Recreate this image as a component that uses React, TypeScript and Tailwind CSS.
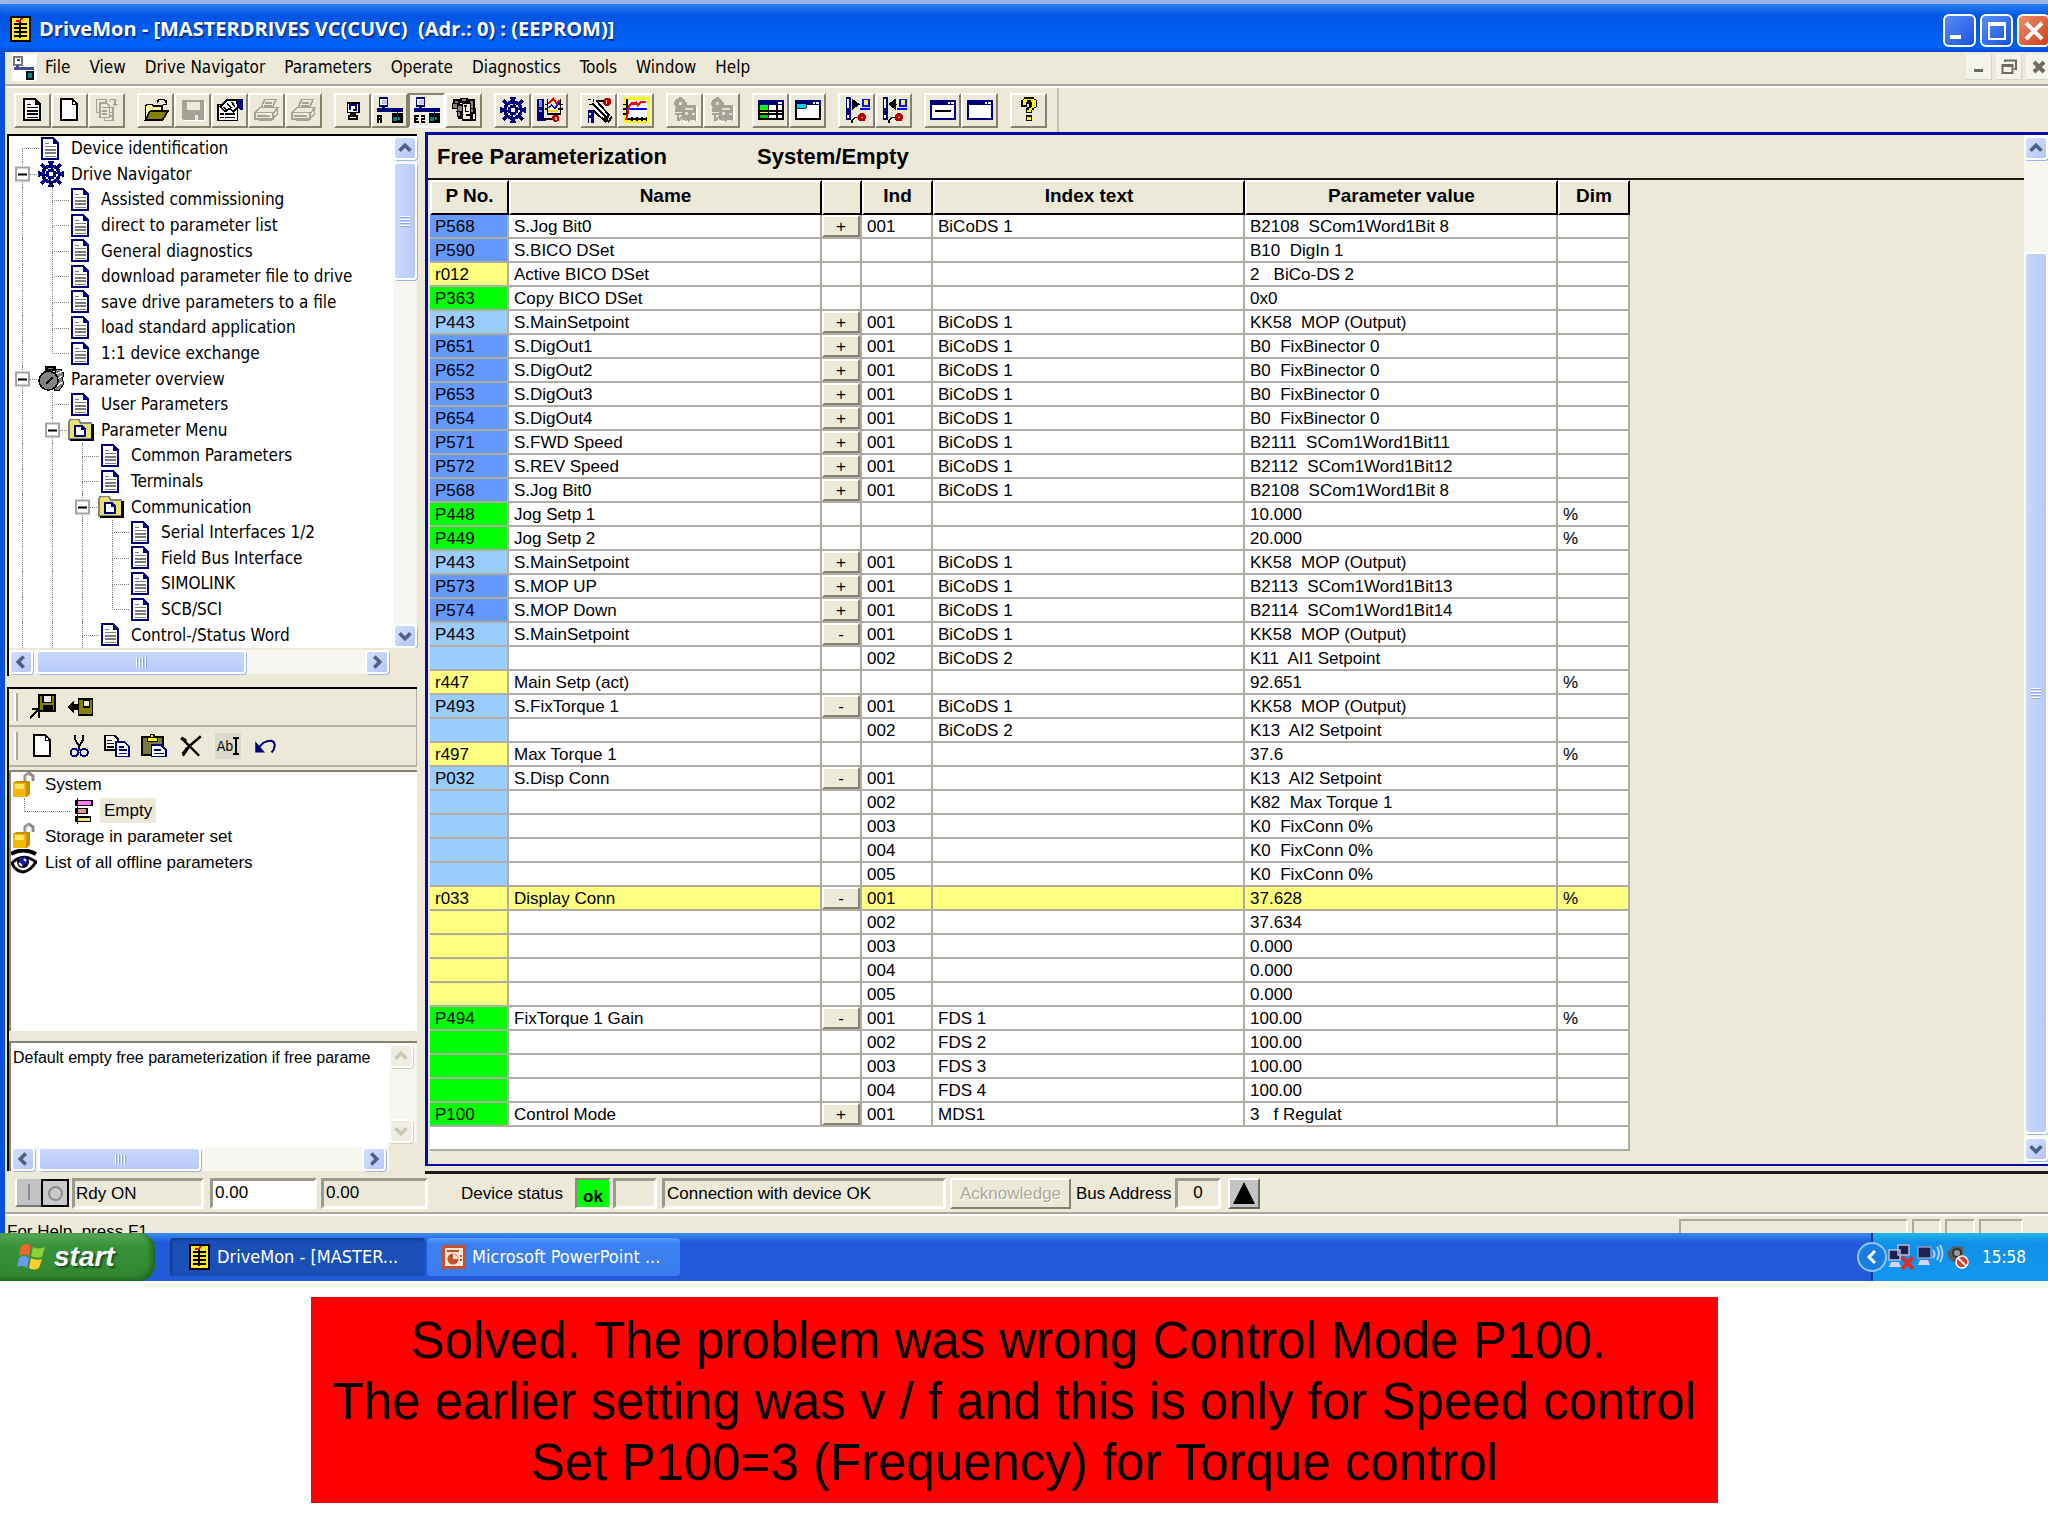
import type { ReactNode } from "react"

const tahoma = "font-['DejaVu_Sans_Condensed','DejaVu_Sans',sans-serif]"
const sans = "font-['Liberation_Sans',Arial,sans-serif]"

const NAVY = "#00007b"
const DIS = "#a5a295"

/* ---------- icons, all on a 16x16 pixel grid ---------- */

function Ico({ children, size = "w-[26px] h-[26px]" }: { children: ReactNode; size?: string }) {
  return (
    <svg viewBox="0 0 16 16" className={`${size} shrink-0`} shapeRendering="crispEdges" fill="none" aria-hidden="true">
      {children}
    </svg>
  )
}

const Doc = ({ ink = "#000", lines = "#000", text = true }: { ink?: string; lines?: string; text?: boolean }) => (
  <Ico>
    <path d="M2.5 1.5h7l3 3v9.500h-10z" fill="#fff" stroke={ink} strokeWidth="1.200" />
    <path d="M9 1h1l3 3v1h-4z" fill={ink} />
    {text ? (
      <path d="M4 4.500h3M4 6.500h7M4 8.500h7M4 10.500h7M4 12.500h7" stroke={lines} strokeWidth="1" />
    ) : (
      <path d="M10 3h1v1h-1z" fill="#fff" />
    )}
  </Ico>
)

const CopyGray = () => (
  <Ico>
    <path d="M1.500 1.500h6v3M1.500 1.500v8h2M3.500 3.500h4l2 2v7h-6zM7.500 6.500h4v8h-5v-2" stroke={DIS} />
    <path d="M5 6.500h3M5 8.500h3M5 10.500h3M9 9.500h2M9 11.500h2" stroke={DIS} />
    <path d="M10 1.500h3v4M11.500 4.500h3M9.500 3v-1" stroke={DIS} />
  </Ico>
)

const OpenFolder = () => (
  <Ico>
    <path d="M1.500 13.500v-8l1-1h3l1 1h5v3" fill="#ffff9c" stroke="#000" />
    <path d="M4.500 8.500h11l-3.500 5.500h-10.500z" fill="#848200" stroke="#000" />
    <path d="M8.500 3.500l1.500-2h3l1.500 2M12 4.500h3M14.500 2v3" stroke="#000" />
  </Ico>
)

const SaveGray = () => (
  <Ico>
    <path d="M1 2h14v12H2l-1-1z" fill={DIS} />
    <path d="M4 3h8v5H4z" fill="#ece9d8" />
    <path d="M9 11h2v3H9z" fill="#ece9d8" />
    <path d="M2 14.500h13.500V3" stroke="#fff" />
  </Ico>
)

const Properties = () => (
  <Ico>
    <path d="M.5 4.500h12v10h-12z" fill="#fff" stroke="#000" />
    <path d="M2 10.500h2M2 12.500h2M5 10.500h6M5 12.500h6" stroke="#000" />
    <path d="M2 6l4-4h6l1 4-3 3-2-2-3 2z" fill="#fff" stroke="#000" />
    <path d="M4 6l2 2M6 4l3 3M9 3l2 3" stroke="#000" />
    <path d="M12 1h4v7h-2l-1-2z" fill={NAVY} />
  </Ico>
)

const PrintGray = () => (
  <Ico>
    <path d="M4.500 6.500l2-5h7l-2 5M7 3.500h4M6 5.500h5" stroke={DIS} />
    <path d="M.5 9.500l3-3h11l-2 3zM.5 9.500v4h11v-4M11.500 13.500l3-3v-4M2 11.500h8" stroke={DIS} />
    <path d="M3 13h8v2H3z" fill={DIS} />
    <path d="M8 10h2v1H8z" fill="#fff" />
  </Ico>
)

const Monitor = () => (
  <Ico>
    <path d="M4.500 3.500h7v6h-7z" fill="#fff" stroke="#000" strokeWidth="1" />
    <path d="M6 8V5h4v3H8" stroke={NAVY} />
    <path d="M6 10h4v1h1v3H5v-3h1z" fill="#000" />
    <path d="M6 12h4v1H6z" fill="#ece9d8" />
  </Ico>
)

const Device = ({ tag }: { tag: "R" | "E" }) => (
  <Ico>
    <path d="M1.500 .5h5v5h-5z" fill="#fff" stroke={NAVY} />
    <path d="M3 2h3v2H3z" fill="#c6c3e6" />
    <path d="M3 6h2v2H3z" fill={NAVY} />
    <path d="M0 7h16v2H0zM12 9h1v2h-1z" fill={NAVY} />
    <path d="M9 10h7v6H9z" fill="#000" />
    <path d="M10 12h2v3h-2zM13 12h1v2h-1z" fill="#008284" />
    {tag === "R" ? (
      <path d="M.5 16v-4.500h2v2h-2M2.500 14v2" stroke="#000" />
    ) : (
      <path d="M3 11.500H.500v4H3M.5 13.500H2.500M4 11.500h2.500v2h-2v2H7" stroke="#000" />
    )}
  </Ico>
)

const Cabinet = () => (
  <Ico>
    <path d="M2 2h3v2H2zM6 1h4v2H6zM11 2h3v8h-3zM1 4h3v3H1zM4 5h4v7H4z" fill="#848284" stroke="#000" />
    <path d="M7 4h5v10H7z" fill="#ece9d8" stroke="#000" />
    <path d="M3 9h3v4H4M9 6v3h2M9 11h4v3M12 7h3v7h-3" stroke="#000" />
    <path d="M8 5h2v1H8z" fill="#000" />
  </Ico>
)

const Helm = () => (
  <Ico>
    <path d="M8 0v16M0 8h16M2 2l12 12M14 2L2 14" stroke={NAVY} strokeWidth="2" />
    <circle cx="8" cy="8" r="5" stroke={NAVY} strokeWidth="2.200" />
    <circle cx="8" cy="8" r="2.500" fill={NAVY} />
    <path d="M5 5h1v1H5zM10 5h1v1h-1zM5 10h1v1H5zM10 10h1v1h-1zM7 4h1v1H7zM4 7h1v1H4zM11 8h1v1h-1zM8 11h1v1H8zM7 7h2v2H7z" fill="#fff" />
    <path d="M6 0h4v1H6zM6 15h4v1H6zM0 6h1v4H0zM15 6h1v4h-1z" fill={NAVY} />
  </Ico>
)

const Trace = () => (
  <Ico>
    <path d="M0 1h4v14H0z" fill={NAVY} />
    <path d="M1 2h2v4H1zM1 8h2v1H1z" fill="#848ee6" />
    <path d="M6.500 1v10M6 10.500h9M14.500 1v9M5 4.500h2M5 7.500h2M13 4.500h3M13 7.500h3" stroke="#000" />
    <path d="M7 4l3-3 2 3 2-2" stroke="#f00" strokeWidth="1.300" />
    <path d="M7 7l2-2 2 2 3-4" stroke="#00f" />
    <path d="M7 8h6v1H7z" fill="#ffcf00" />
    <path d="M5 15v-1.500h5" stroke="#000" />
    <circle cx="11.500" cy="13" r="2.200" fill="#b50000" />
    <path d="M11 12h1v2h-1z" fill="#ffb5b5" />
  </Ico>
)

const WriteParam = () => (
  <Ico>
    <path d="M1 8h4v8H3v-3H2v3H1z" fill={NAVY} />
    <path d="M2 10h1v1H2z" fill="#fff" />
    <path d="M1 1.500h2M4.500 1v2M2 4.500h3M6 2.500h2M5 6.500h2" stroke="#000" />
    <path d="M4 4l9 9M7 3l7 8-2 4-8-7" fill="#fff" stroke="#000" strokeWidth="1.200" />
    <path d="M11 13l3 2 2-3" stroke="#000" strokeWidth="1.400" />
    <circle cx="13" cy="3" r="2.500" fill="#b50000" />
    <path d="M12 2h1v2h-1z" fill="#ffb5b5" />
    <path d="M8 2.500h3" stroke="#000" />
  </Ico>
)

const Curve = () => (
  <Ico>
    <path d="M0 0h16v16H0z" fill="#ff0" />
    <path d="M2 2h13v11H2z" fill="#fff" />
    <path d="M2.500 1v13M1 13.500h14M0 4.500h3M0 7.500h3M0 10.500h3M5.500 12v3M8.500 12v3M11.500 12v3M14.500 12v3" stroke="#000" />
    <path d="M2 7.500h13" stroke="#00f" />
    <path d="M2 14l2-9 1-1h3V3l1 2 2-2h3" stroke="#f00" strokeWidth="1.300" />
  </Ico>
)

const GearGray = () => (
  <Ico>
    <circle cx="5" cy="4" r="3.500" fill={DIS} />
    <path d="M4 0h2v8H4zM1 3h8v2H1zM6 5h9v9H6zM2 7h4v2H2z" fill={DIS} />
    <path d="M4 3h2v2H4zM8 7h5v1H8zM8 9h2v2H8zM12 10h2v1h-2z" fill="#e2dfce" />
    <path d="M2 10.500h4M3.500 11v4M6 12l-2 3M8.500 15v-3M10 15l2-2M14.500 15v-3" stroke={DIS} />
    <path d="M15.500 6v9M7 15.500h2" stroke="#fff" />
  </Ico>
)

const TableIcon = () => (
  <Ico>
    <path d="M.5 2.500h15v11h-15z" fill="#fff" stroke="#000" />
    <path d="M0 2h16v3H0z" fill={NAVY} />
    <path d="M1 5h5v3H1z" fill="#0f0" />
    <path d="M1 8h5v3H1z" fill="#ff0" />
    <path d="M1 11h5v2H1z" fill="#0c0" />
    <path d="M6.500 5v8M11.500 5v8M1 8.500h14M1 10.500h14" stroke="#000" />
    <path d="M12 3h3v1h-3z" fill="#fff" />
  </Ico>
)

const WindowIcon = ({ mode }: { mode: "tab" | "line" | "plain" }) => (
  <Ico>
    <path d="M.5 2.500h15v11h-15z" fill="#fff" stroke={mode === "tab" ? "#000" : NAVY} />
    <path d="M0 2h16v3H0z" fill={NAVY} />
    {mode === "tab" && <path d="M1 4h6v3H1z" fill="#00cfff" stroke="#000" strokeWidth=".5" />}
    {mode === "line" && <path d="M3 8.500h10" stroke="#000" />}
    <path d="M11 3h1v1h-1zM13 3h2v1h-2z" fill="#fff" />
  </Ico>
)

const Transfer = ({ back = false }: { back?: boolean }) => (
  <Ico>
    <path d="M1.500 .5h2v13h-2z" fill="#fff" stroke={NAVY} />
    <path d="M2 7h1v4H2z" fill={NAVY} />
    {back ? <path d="M9 1v7L5 5V4z" fill="#000" /> : <path d="M5 1v7l4-3V4z" fill="#000" />}
    <path d="M5 4h5v1H5z" fill="#000" />
    <path d="M11.500 1.500h4v4h-4z" fill="#ffef42" stroke="#00f" />
    <path d="M10 7.500h6" stroke="#00f" />
    <path d="M4 15.500h1v-1l2-2h3" stroke="#000" />
    <circle cx="11" cy="12.500" r="2.500" fill="#b50000" />
    <path d="M10.500 12h1v1h-1z" fill="#ffb5b5" />
  </Ico>
)

const Help = () => (
  <Ico>
    <path d="M3 6V2h1V1h1V0h6v1h1v1h1v4h-1v1h-1v1h-1v2H6V7h1V6h1V4H7v2z" fill="#000" />
    <path d="M4 5V2h1V1h6v1h1v4h-1v1h-1v1H9v1H7V8h1V7h1V6h1V3H9V2H7v1H6v2z" fill="#ff0" />
    <path d="M6 11h4v4H6z" fill="#000" />
    <path d="M7 12h2v2H7z" fill="#ff0" />
  </Ico>
)

const Controller = () => (
  <Ico>
    <path d="M4 0h7v3H4z" fill="#000" />
    <path d="M11 2h3l2 3-1 3 1 3-3 4h-3z" fill="#848284" stroke="#000" strokeWidth=".7" />
    <path d="M11 5l4-2M12 8l3-2M12 12l3-2" stroke="#fff" strokeWidth=".8" />
    <circle cx="6.500" cy="9" r="5.800" fill="#848284" stroke="#000" />
    <path d="M5 11l4-4" stroke="#000" />
    <path d="M6 1h3v1H6z" fill="#848284" />
  </Ico>
)

const FolderDoc = () => (
  <Ico>
    <path d="M.5 13.500v-10l1-2h5l1 2h7v10z" fill="#e7e36b" stroke="#848284" />
    <path d="M1 14h14V4" stroke="#000" strokeWidth="1.500" />
    <path d="M4.500 5.500h4l2 2v4h-6z" fill="#fff" stroke={NAVY} strokeWidth="1.300" />
    <path d="M8 5h1l2 2v1H8z" fill={NAVY} />
  </Ico>
)

const Lock = () => (
  <svg viewBox="0 0 26 26" className="w-[26px] h-[26px] shrink-0" fill="none" aria-hidden="true">
    <path d="M14 11V4l4-3 4 3v5" stroke="#8a8a8a" strokeWidth="3" />
    <path d="M15 9V4l3-2" stroke="#d8d8d8" strokeWidth="1" />
    <path d="M2 11l3-2h14v13l-3 3H2z" fill="#c98d00" />
    <path d="M2 11h13v14H2z" fill="#f2b705" />
    <path d="M4 12h9v5H4z" fill="#ffe566" />
  </svg>
)

const ListIcon = () => (
  <Ico>
    <path d="M4.500 0v16" stroke="#000" />
    <path d="M3 1h11v4H3zM3 6h8v4H3zM3 11h10v4H3z" fill="#000" />
    <path d="M5 2h8v2H5z" fill="#ff7bff" />
    <path d="M5 7h5v2H5z" fill="#e79a9a" />
    <path d="M5 12h7v2H5z" fill="#efe76b" />
  </Ico>
)

const Eye = () => (
  <svg viewBox="0 0 26 26" className="w-[26px] h-[26px] shrink-0" fill="none" aria-hidden="true">
    <path d="M0 5Q12-2 25 5" stroke="#000" strokeWidth="4" />
    <path d="M1 14Q12 3 25 13Q19 22 12 23Q4 22 1 14z" fill="#fff" stroke="#000" strokeWidth="3" />
    <circle cx="12" cy="13" r="6" fill="#000" />
    <circle cx="12" cy="12" r="4" fill="#1818b8" />
    <path d="M8 14l3 3M13 10l2 2" stroke="#fff" strokeWidth="2" />
  </svg>
)

const DiskIn = () => (
  <Ico>
    <path d="M5.500 .5h10v10h-10z" fill="#848200" stroke="#000" />
    <path d="M8 1h5v4H8z" fill="#ece9d8" stroke="#000" strokeWidth=".7" />
    <path d="M8 7h6v4H8z" fill="#000" />
    <path d="M0 15l5-5M1 9.500h4.500v5" stroke="#000" strokeWidth="1.300" />
  </Ico>
)

const DiskOut = () => (
  <Ico>
    <path d="M7 3h9v10H7z" fill="#848200" stroke="#000" strokeWidth=".8" />
    <path d="M10 4h4v4h-4z" fill="#ece9d8" stroke="#000" strokeWidth=".7" />
    <path d="M0 8l4-4v2h3v4H4v2z" fill="#000" />
  </Ico>
)

const Cut = () => (
  <Ico>
    <path d="M5 1v3l3 5M10 1v3L7 9" stroke="#000" strokeWidth="1.200" />
    <circle cx="4.500" cy="12" r="2.300" stroke={NAVY} strokeWidth="1.200" />
    <circle cx="10.500" cy="12" r="2.300" stroke={NAVY} strokeWidth="1.200" />
    <path d="M7 9h1v2H7z" fill={NAVY} />
  </Ico>
)

const Copy = () => (
  <Ico>
    <path d="M.5 1.500h6l2 2v7h-8z" fill="#fff" stroke="#000" />
    <path d="M2 4.500h3M2 6.500h4M2 8.500h4" stroke="#000" />
    <path d="M7.500 5.500h5l3 3v6h-8z" fill="#fff" stroke={NAVY} />
    <path d="M9 8.500h3M9 10.500h5M9 12.500h5" stroke={NAVY} />
  </Ico>
)

const Paste = () => (
  <Ico>
    <path d="M.5 2.500h13v11h-13z" fill="#7b7942" stroke="#000" />
    <path d="M4 3h6v2H4z" fill="#ff0" stroke="#000" strokeWidth=".7" />
    <path d="M6 1h2v2H6z" fill="#ff0" stroke="#000" strokeWidth=".7" />
    <path d="M6.500 7.500h6l3 3v4h-9z" fill="#fff" stroke={NAVY} />
    <path d="M8 10.500h4M8 12.500h6" stroke={NAVY} />
  </Ico>
)

const Delete = () => (
  <svg viewBox="0 0 16 16" className="w-[26px] h-[26px] shrink-0" fill="none" aria-hidden="true">
    <path d="M2 3l11 11M14 2L7 8l-4 6" stroke="#000" strokeWidth="1.500" />
    <path d="M3 13l3-4M2 3l3 2" stroke="#000" strokeWidth="2" />
  </svg>
)

const RenameCursor = () => (
  <svg viewBox="0 0 6 18" className="h-[18px] w-[6px]" shapeRendering="crispEdges" fill="none" aria-hidden="true">
    <path d="M0 1h6M3 1v16M0 17h6" stroke="#000" strokeWidth="2" />
  </svg>
)

const Undo = () => (
  <svg viewBox="0 0 16 16" className="w-[26px] h-[26px] shrink-0" fill="none" aria-hidden="true">
    <path d="M2 5v7h6z" fill={NAVY} />
    <path d="M4 9l3-3Q13 3 14 7Q14 10 12 12" stroke={NAVY} strokeWidth="1.200" />
  </svg>
)

const AppIcon = () => (
  <svg viewBox="0 0 21 26" className="h-[26px] w-[21px] shrink-0" shapeRendering="crispEdges" aria-hidden="true">
    <path d="M0 0h21v26H0z" fill="#000" />
    <path d="M2 2h17v22H2z" fill="#ffe81f" />
    <path d="M4 8h13M4 12h13M4 16h13M4 20h13M10 6v16" stroke="#000" strokeWidth="2" />
    <path d="M6 5h3M9 6l3-4" stroke="#e00" strokeWidth="2" />
  </svg>
)

const MdiIcon = () => (
  <svg viewBox="0 0 25 27" className="h-[27px] w-[25px] shrink-0" shapeRendering="crispEdges" aria-hidden="true">
    <path d="M0 0h25v27H0z" fill="#fff" />
    <path d="M2 3h8v8H2z" fill="#fff" stroke="#777" strokeWidth="2" />
    <path d="M5 5h3v2H5zM4 11h3v3H4z" fill="#4a4a9c" />
    <path d="M2 13h20v3H2z" fill="#4a4a9c" />
    <path d="M14 17h8v9h-8z" fill="#111" />
    <path d="M16 19h4v5h-4z" fill="#008284" />
  </svg>
)

/* ---------- window parts ---------- */

const chevrons = {
  up: "M5 14l6-6 6 6",
  down: "M5 8l6 6 6-6",
  left: "M14 5l-6 6 6 6",
  right: "M8 5l6 6-6 6",
}

function ScrollButton({ dir, disabled = false }: { dir: keyof typeof chevrons; disabled?: boolean }) {
  return (
    <button
      type="button"
      aria-label={`Scroll ${dir}`}
      disabled={disabled}
      className={`flex size-6 shrink-0 items-center justify-center rounded-sm border-2 border-white ${
        disabled ? "bg-[#efede2] shadow-[1px_1px_0_#d4d1c0]" : "bg-linear-to-br from-[#d6e0fd] to-[#b4c6f8] shadow-[1px_1px_0_#9db5ea]"
      }`}
    >
      <svg viewBox="0 0 22 22" className="size-5" fill="none">
        <path d={chevrons[dir]} stroke={disabled ? "#c9c7ba" : "#4d6185"} strokeWidth="4" />
      </svg>
    </button>
  )
}

function Thumb({ vertical = false, className = "" }: { vertical?: boolean; className?: string }) {
  return (
    <div
      className={`flex items-center justify-center rounded-sm border-2 border-white shadow-[1px_1px_0_#9db5ea] ${
        vertical ? "w-6 bg-linear-to-r" : "h-6 bg-linear-to-b"
      } from-[#cbd8fc] to-[#b8caf9] ${className}`}
    >
      <div className={`flex gap-[2px] ${vertical ? "flex-col" : ""}`}>
        {[0, 1, 2, 3].map((i) => (
          <span
            key={i}
            className={
              vertical ? "h-px w-[10px] bg-white shadow-[0_1px_0_#8caae6]" : "h-[11px] w-px bg-white shadow-[1px_0_0_#8caae6]"
            }
          />
        ))}
      </div>
    </div>
  )
}

function ToolButton({ label, pressed = false, disabled = false, children }: { label: string; pressed?: boolean; disabled?: boolean; children: ReactNode }) {
  return (
    <button
      type="button"
      aria-label={label}
      disabled={disabled}
      className={`flex h-[35px] w-[37px] items-center justify-center border-2 ${
        pressed
          ? "border-t-[#85826f] border-l-[#85826f] border-r-white border-b-white bg-[#f4f3ea]"
          : "border-t-white border-l-white border-r-[#85826f] border-b-[#85826f]"
      }`}
    >
      {children}
    </button>
  )
}

const toolGroups: { label: string; icon: ReactNode; pressed?: boolean; disabled?: boolean }[][] = [
  [
    { label: "Parameter list", icon: <Doc /> },
    { label: "New", icon: <Doc text={false} /> },
    { label: "Duplicate", icon: <CopyGray />, disabled: true },
  ],
  [
    { label: "Open", icon: <OpenFolder /> },
    { label: "Save", icon: <SaveGray />, disabled: true },
    { label: "Properties", icon: <Properties /> },
    { label: "Print", icon: <PrintGray />, disabled: true },
    { label: "Print preview", icon: <PrintGray />, disabled: true },
  ],
  [
    { label: "Offline", icon: <Monitor /> },
    { label: "Online RAM", icon: <Device tag="R" /> },
    { label: "Online EEPROM", icon: <Device tag="E" />, pressed: true },
    { label: "Device", icon: <Cabinet /> },
  ],
  [
    { label: "Drive navigator", icon: <Helm /> },
    { label: "Trace", icon: <Trace /> },
  ],
  [
    { label: "Write parameter", icon: <WriteParam /> },
    { label: "Curve", icon: <Curve /> },
  ],
  [
    { label: "Start drive", icon: <GearGray />, disabled: true },
    { label: "Stop drive", icon: <GearGray />, disabled: true },
  ],
  [
    { label: "Table view", icon: <TableIcon /> },
    { label: "Tab view", icon: <WindowIcon mode="tab" /> },
  ],
  [
    { label: "Download", icon: <Transfer /> },
    { label: "Upload", icon: <Transfer back /> },
  ],
  [
    { label: "Split window", icon: <WindowIcon mode="line" /> },
    { label: "Single window", icon: <WindowIcon mode="plain" /> },
  ],
  [{ label: "Help", icon: <Help /> }],
]

const menus = ["File", "View", "Drive Navigator", "Parameters", "Operate", "Diagnostics", "Tools", "Window", "Help"]

/* ---------- navigation tree ---------- */

type TreeRow = { level: number; label: string; icon?: "helm" | "controller" | "folder"; first?: boolean; last?: boolean }

const tree: TreeRow[] = [
  { level: 0, label: "Device identification", first: true },
  { level: 0, label: "Drive Navigator", icon: "helm" },
  { level: 1, label: "Assisted commissioning" },
  { level: 1, label: "direct to parameter list" },
  { level: 1, label: "General diagnostics" },
  { level: 1, label: "download parameter file to drive" },
  { level: 1, label: "save drive parameters to a file" },
  { level: 1, label: "load standard application" },
  { level: 1, label: "1:1 device exchange", last: true },
  { level: 0, label: "Parameter overview", icon: "controller" },
  { level: 1, label: "User Parameters" },
  { level: 1, label: "Parameter Menu", icon: "folder" },
  { level: 2, label: "Common Parameters" },
  { level: 2, label: "Terminals" },
  { level: 2, label: "Communication", icon: "folder" },
  { level: 3, label: "Serial Interfaces 1/2" },
  { level: 3, label: "Field Bus Interface" },
  { level: 3, label: "SIMOLINK" },
  { level: 3, label: "SCB/SCI", last: true },
  { level: 2, label: "Control-/Status Word" },
]

function TreeItem({ row }: { row: TreeRow }) {
  const { level, label, icon, first, last } = row
  return (
    <li className="flex min-h-0 items-center">
      {Array.from({ length: level }, (_, i) => (
        <span key={i} className="ml-[13px] h-full w-[17px] shrink-0 border-l border-dotted border-[#808080]" />
      ))}
      <span className="relative ml-[13px] flex h-full w-[17px] shrink-0 flex-col">
        <span className={`flex-1 border-b border-dotted border-[#808080] ${first ? "" : "border-l"}`} />
        <span className={`flex-1 border-dotted border-[#808080] ${last ? "" : "border-l"}`} />
        {icon && (
          <button
            type="button"
            aria-label={`Collapse ${label}`}
            className="absolute top-1/2 -left-[7px] flex size-[15px] -translate-y-1/2 items-center justify-center border-2 border-[#a5a5a0] bg-white"
          >
            <span className="h-[2px] w-[9px] bg-black" />
          </button>
        )}
      </span>
      <span className="flex w-6 shrink-0 justify-center">
        {icon === "helm" && <Helm />}
        {icon === "controller" && <Controller />}
        {icon === "folder" && <FolderDoc />}
        {!icon && <Doc ink={NAVY} lines="#7b7b7b" />}
      </span>
      <span className="ml-2 whitespace-nowrap">{label}</span>
    </li>
  )
}

/* ---------- parameter table ---------- */

type Kind = "blue" | "light" | "yellow" | "green"
type Param = [kind: Kind, no: string, name: string, sign: string, ind: string, text: string, value: string, dim?: string]

const params: Param[] = [
  ["blue", "P568", "S.Jog Bit0", "+", "001", "BiCoDS 1", "B2108  SCom1Word1Bit 8"],
  ["blue", "P590", "S.BICO DSet", "", "", "", "B10  DigIn 1"],
  ["yellow", "r012", "Active BICO DSet", "", "", "", "2   BiCo-DS 2"],
  ["green", "P363", "Copy BICO DSet", "", "", "", "0x0"],
  ["light", "P443", "S.MainSetpoint", "+", "001", "BiCoDS 1", "KK58  MOP (Output)"],
  ["blue", "P651", "S.DigOut1", "+", "001", "BiCoDS 1", "B0  FixBinector 0"],
  ["blue", "P652", "S.DigOut2", "+", "001", "BiCoDS 1", "B0  FixBinector 0"],
  ["blue", "P653", "S.DigOut3", "+", "001", "BiCoDS 1", "B0  FixBinector 0"],
  ["blue", "P654", "S.DigOut4", "+", "001", "BiCoDS 1", "B0  FixBinector 0"],
  ["blue", "P571", "S.FWD Speed", "+", "001", "BiCoDS 1", "B2111  SCom1Word1Bit11"],
  ["blue", "P572", "S.REV Speed", "+", "001", "BiCoDS 1", "B2112  SCom1Word1Bit12"],
  ["blue", "P568", "S.Jog Bit0", "+", "001", "BiCoDS 1", "B2108  SCom1Word1Bit 8"],
  ["green", "P448", "Jog Setp 1", "", "", "", "10.000", "%"],
  ["green", "P449", "Jog Setp 2", "", "", "", "20.000", "%"],
  ["light", "P443", "S.MainSetpoint", "+", "001", "BiCoDS 1", "KK58  MOP (Output)"],
  ["blue", "P573", "S.MOP UP", "+", "001", "BiCoDS 1", "B2113  SCom1Word1Bit13"],
  ["blue", "P574", "S.MOP Down", "+", "001", "BiCoDS 1", "B2114  SCom1Word1Bit14"],
  ["light", "P443", "S.MainSetpoint", "-", "001", "BiCoDS 1", "KK58  MOP (Output)"],
  ["light", "", "", "", "002", "BiCoDS 2", "K11  AI1 Setpoint"],
  ["yellow", "r447", "Main Setp (act)", "", "", "", "92.651", "%"],
  ["light", "P493", "S.FixTorque 1", "-", "001", "BiCoDS 1", "KK58  MOP (Output)"],
  ["light", "", "", "", "002", "BiCoDS 2", "K13  AI2 Setpoint"],
  ["yellow", "r497", "Max Torque 1", "", "", "", "37.6", "%"],
  ["light", "P032", "S.Disp Conn", "-", "001", "", "K13  AI2 Setpoint"],
  ["light", "", "", "", "002", "", "K82  Max Torque 1"],
  ["light", "", "", "", "003", "", "K0  FixConn 0%"],
  ["light", "", "", "", "004", "", "K0  FixConn 0%"],
  ["light", "", "", "", "005", "", "K0  FixConn 0%"],
  ["yellow", "r033", "Display Conn", "-", "001", "", "37.628", "%"],
  ["yellow", "", "", "", "002", "", "37.634"],
  ["yellow", "", "", "", "003", "", "0.000"],
  ["yellow", "", "", "", "004", "", "0.000"],
  ["yellow", "", "", "", "005", "", "0.000"],
  ["green", "P494", "FixTorque 1 Gain", "-", "001", "FDS 1", "100.00", "%"],
  ["green", "", "", "", "002", "FDS 2", "100.00"],
  ["green", "", "", "", "003", "FDS 3", "100.00"],
  ["green", "", "", "", "004", "FDS 4", "100.00"],
  ["green", "P100", "Control Mode", "+", "001", "MDS1", "3   f Regulat"],
]

const kindColor: Record<Kind, string> = {
  blue: "bg-[#6699ff]",
  light: "bg-[#99ccff]",
  yellow: "bg-[#ffff80]",
  green: "bg-[#00ff00]",
}

function ParamTable() {
  const cell = "h-6 overflow-hidden border-r-2 border-b-2 border-[#b0aea4] p-0 pt-[2px] pl-[5px] whitespace-pre"
  return (
    <table className={`w-[1200px] table-fixed border-separate border-spacing-0 text-[17px] leading-[20px] ${sans}`}>
      <colgroup>
        <col className="w-[79px]" />
        <col className="w-[313px]" />
        <col className="w-[40px]" />
        <col className="w-[71px]" />
        <col className="w-[312px]" />
        <col className="w-[313px]" />
        <col className="w-[72px]" />
      </colgroup>
      <thead>
        <tr>
          {["P No.", "Name", "", "Ind", "Index text", "Parameter value", "Dim"].map((h, i) => (
            <th
              key={i}
              scope="col"
              className="h-[35px] border-2 border-t-white border-l-white border-r-black border-b-black bg-[#ece9d8] p-0 pb-[3px] text-[19px] font-bold"
            >
              {h}
            </th>
          ))}
        </tr>
      </thead>
      <tbody className="bg-white">
        {params.map(([kind, no, name, sign, ind, text, value, dim], i) => (
          <tr key={i} className={no === "r033" ? "bg-[#ffff80]" : ""}>
            <td className={`${cell} ${kindColor[kind]}`}>{no}</td>
            <td className={cell}>{name}</td>
            <td className="h-6 border-r-2 border-b-2 border-[#b0aea4] p-0">
              {sign && (
                <button
                  type="button"
                  aria-label={sign === "+" ? "Expand indices" : "Collapse indices"}
                  className="block h-[22px] w-full border-2 border-t-white border-l-white border-r-[#85826f] border-b-[#85826f] bg-[#ece9d8] text-center leading-[20px]"
                >
                  {sign}
                </button>
              )}
            </td>
            <td className={cell}>{ind}</td>
            <td className={cell}>{text}</td>
            <td className={cell}>{value}</td>
            <td className={cell}>{dim}</td>
          </tr>
        ))}
        <tr>
          <td colSpan={7} className="h-6 border-r-2 border-b-2 border-[#b0aea4] p-0" />
        </tr>
      </tbody>
    </table>
  )
}

/* ---------- main regions ---------- */

function TitleBar() {
  const btn = "flex size-[33px] items-center justify-center rounded-md border-2 border-white"
  return (
    <header className="overflow-hidden border-t-4 border-[#9cb4ea]">
      <div className="flex h-12 items-center bg-linear-to-b from-[#2a80f6] via-[#0054e3] via-25% to-[#0066ff] pt-[2px] pl-[10px] shadow-[inset_0_-4px_4px_-2px_#0a3fc0]">
        <AppIcon />
        <h1 className="ml-2 text-[20px] leading-6 font-bold whitespace-pre text-white [text-shadow:1px_2px_1px_#0a2a80] font-['Open_Sans',sans-serif]">
          {"DriveMon - [MASTERDRIVES VC(CUVC)  (Adr.: 0) : (EEPROM)]"}
        </h1>
        <div className="mt-[3px] -mr-[2px] ml-auto flex gap-[4px]">
          <button type="button" aria-label="Minimize" className={`${btn} bg-linear-to-br from-[#5a8cf5] to-[#1c50e0]`}>
            <span className="mt-3 mr-2 h-[4px] w-[11px] bg-white" />
          </button>
          <button type="button" aria-label="Maximize" className={`${btn} bg-linear-to-br from-[#5a8cf5] to-[#1c50e0]`}>
            <span className="size-[18px] border-2 border-t-4 border-white" />
          </button>
          <button type="button" aria-label="Close" className={`${btn} bg-linear-to-br from-[#f08a6c] to-[#cf3a12]`}>
            <svg viewBox="0 0 20 20" className="size-5">
              <path d="M2 2l16 16M18 2L2 18" stroke="#fff" strokeWidth="4" />
            </svg>
          </button>
        </div>
      </div>
    </header>
  )
}

function MenuBar() {
  const btn = "flex size-[26px] items-center justify-center border-r border-b border-[#d8d5c4] bg-[#f4f3ec]"
  return (
    <nav className="flex h-[34px] items-center overflow-hidden border-b-2 border-[#aca899] pb-[2px] pl-[7px]">
      <MdiIcon />
      <ul className={`ml-2 flex gap-[19px] text-[17px] leading-6 ${tahoma}`}>
        {menus.map((m) => (
          <li key={m}>
            <button type="button">{m}</button>
          </li>
        ))}
      </ul>
      <div className="-mr-[4px] ml-auto flex gap-[4px]">
        <button type="button" aria-label="Minimize child" className={btn}>
          <span className="mt-2 h-[3px] w-[9px] bg-[#6e6c60]" />
        </button>
        <button type="button" aria-label="Restore child" className={btn}>
          <svg viewBox="0 0 16 16" className="size-4" fill="none" stroke="#6e6c60">
            <path d="M4 3V1.500h11V10h-2" strokeWidth="2" />
            <path d="M1.500 6h10v8h-10z" strokeWidth="2" />
            <path d="M1 6.500h11" strokeWidth="3" />
          </svg>
        </button>
        <button type="button" aria-label="Close child" className={btn}>
          <svg viewBox="0 0 16 16" className="size-4" stroke="#6e6c60" strokeWidth="4">
            <path d="M3 3l10 10M13 3L3 13" />
          </svg>
        </button>
      </div>
    </nav>
  )
}

function Toolbar() {
  return (
    <div className="flex h-[46px] items-center border-t-2 border-white pl-[9px]">
      <div className="flex h-full items-center gap-3 border-r-2 border-[#c4c1b0] pr-[10px]">
        {toolGroups.map((group, i) => (
          <div key={i} className="flex">
            {group.map((t) => (
              <ToolButton key={t.label} label={t.label} pressed={t.pressed} disabled={t.disabled}>
                {t.icon}
              </ToolButton>
            ))}
          </div>
        ))}
      </div>
    </div>
  )
}

function Sidebar() {
  const strip = "flex items-center border-r border-b-2 border-[#b5b2a2] pl-[5px]"
  const grip = "h-7 w-1 border-r-2 border-[#aca899] bg-white"
  return (
    <aside className={`flex w-[412px] shrink-0 flex-col pt-[2px] pl-[2px] text-[17px] leading-none ${tahoma}`}>
      {/* navigation tree */}
      <div className="flex h-[542px] flex-col border-t-2 border-l-2 border-black bg-white">
        <div className="flex min-h-0 flex-1">
          <ul className="grid h-[512px] min-w-0 flex-1 auto-rows-fr overflow-hidden">
            {tree.map((row) => (
              <TreeItem key={row.label} row={row} />
            ))}
          </ul>
          <div className="flex w-6 flex-col bg-[#f7f6f1]">
            <ScrollButton dir="up" />
            <Thumb vertical className="mt-[2px] h-[118px]" />
            <div className="mt-auto">
              <ScrollButton dir="down" />
            </div>
          </div>
        </div>
        <div className="flex h-[28px] items-center bg-[#ece9d8]">
          <div className="flex flex-1 items-center bg-[#f7f6f1]">
            <ScrollButton dir="left" />
            <Thumb className="ml-[3px] w-[210px]" />
            <div className="ml-auto">
              <ScrollButton dir="right" />
            </div>
          </div>
          <div className="w-7" />
        </div>
      </div>

      {/* free parameterization files */}
      <div className="mt-[11px] flex h-[484px] flex-col border-t-2 border-l-2 border-black">
        <div className={`${strip} h-[38px]`}>
          <div className={grip} />
          <button type="button" aria-label="Load set" className="ml-[12px]">
            <DiskIn />
          </button>
          <button type="button" aria-label="Store set" className="ml-[11px]">
            <DiskOut />
          </button>
        </div>
        <div className={`${strip} h-10`}>
          <div className={grip} />
          <div className="ml-3 flex gap-[11px]">
            <button type="button" aria-label="New entry">
              <Doc text={false} />
            </button>
            <button type="button" aria-label="Cut">
              <Cut />
            </button>
            <button type="button" aria-label="Copy">
              <Copy />
            </button>
            <button type="button" aria-label="Paste">
              <Paste />
            </button>
            <button type="button" aria-label="Delete">
              <Delete />
            </button>
            <button type="button" aria-label="Rename" className="flex h-[26px] w-[26px] items-center justify-center bg-[#dcd9cf] text-[14px]">
              Ab
              <RenameCursor />
            </button>
            <button type="button" aria-label="Undo">
              <Undo />
            </button>
          </div>
        </div>
        <div className={`mt-[3px] h-[261px] border-t-2 border-l-2 border-[#85826f] bg-white ${sans}`}>
          <ul className="grid h-[103px] auto-rows-fr text-[17px]">
            <li className="flex min-h-0 items-center gap-[8px]">
              <Lock />
              System
            </li>
            <li className="flex min-h-0 items-center">
              <span className="mb-3 ml-[13px] h-[14px] w-[46px] border-b border-l border-dotted border-[#808080]" />
              <ListIcon />
              <span className="ml-1 bg-[#ece9d8] px-[4px] py-[4px]">Empty</span>
            </li>
            <li className="flex min-h-0 items-center gap-[8px]">
              <Lock />
              Storage in parameter set
            </li>
            <li className="flex min-h-0 items-center gap-[8px]">
              <Eye />
              List of all offline parameters
            </li>
          </ul>
        </div>
        <div className="mt-[10px] flex flex-1 border-t-2 border-l-2 border-[#85826f] bg-white">
          <div className="flex min-w-0 flex-1 flex-col">
            <p className={`flex-1 overflow-hidden pt-[5px] pl-[2px] text-[16px] leading-5 whitespace-nowrap ${sans}`}>
              Default empty free parameterization if free parame
            </p>
            <div className="flex items-center bg-[#f7f6f1] pr-[3px]">
              <ScrollButton dir="left" />
              <Thumb className="ml-[3px] w-[163px]" />
              <div className="ml-auto">
                <ScrollButton dir="right" />
              </div>
            </div>
          </div>
          <div className="flex w-7 flex-col bg-[#ece9d8]">
            <div className="flex flex-1 flex-col justify-between bg-[#f7f6f1] pt-px">
              <ScrollButton dir="up" disabled />
              <ScrollButton dir="down" disabled />
            </div>
            <div className="h-7" />
          </div>
        </div>
      </div>
    </aside>
  )
}

function ControlBar() {
  const sunken = "h-[31px] border-3 border-t-[#9c9a8c] border-l-[#9c9a8c] border-r-white border-b-white"
  return (
    <div className={`flex h-10 items-center border-b-2 border-[#aca899] pl-[10px] text-[17px] leading-none whitespace-nowrap ${sans}`}>
      <button type="button" aria-label="On" className="flex h-7 w-[26px] items-center justify-center border-b-2 border-l-2 border-b-[#777] border-l-white bg-[#c3c3c3]">
        <span className="h-4 w-[2px] bg-[#8a8a8a]" />
      </button>
      <button type="button" aria-label="Off" className="flex h-7 w-[28px] items-center justify-center border-2 border-black bg-[#c9c9c9]">
        <span className="size-[15px] rounded-full border-2 border-[#8a8a8a]" />
      </button>
      <div className={`${sunken} ml-[3px] flex w-[132px] items-center pl-[1px]`}>Rdy ON</div>
      <input aria-label="Setpoint" defaultValue="0.00" className={`${sunken} ml-[6px] w-[107px] bg-white pl-[2px]`} />
      <input aria-label="Actual value" readOnly defaultValue="0.00" className={`${sunken} ml-[4px] w-[107px] pl-[2px]`} />
      <span className="ml-[33px] w-[114px]">Device status</span>
      <span className="flex h-[31px] w-[36px] items-end justify-center border-2 border-t-[#8c8a7c] border-l-[#8c8a7c] border-r-white border-b-white bg-[#00ff00] pb-[2px] font-bold">
        ok
      </span>
      <div className={`${sunken} ml-[2px] w-[44px]`} />
      <div className={`${sunken} ml-[5px] flex w-[284px] items-center pl-[2px]`}>Connection with device OK</div>
      <button
        type="button"
        disabled
        className="ml-[4px] h-[31px] w-[121px] border-2 border-t-white border-l-white border-r-[#85826f] border-b-[#85826f] text-[#aca899] [text-shadow:1px_1px_0_#fff]"
      >
        Acknowledge
      </button>
      <label htmlFor="bus" className="ml-[5px] w-[99px]">
        Bus Address
      </label>
      <input id="bus" defaultValue="0" className={`${sunken} w-[46px] text-center`} />
      <button type="button" aria-label="Next address" className="ml-[7px] flex h-[31px] w-8 items-center justify-center border-2 border-t-white border-l-white border-r-[#666] border-b-[#666] bg-[#c3c3c3]">
        <svg viewBox="0 0 22 22" className="size-[22px]">
          <path d="M11 0l11 22H0z" fill="#000" />
        </svg>
      </button>
    </div>
  )
}

function StatusBar() {
  const pane = "h-full border-t-2 border-l-2 border-r-2 border-t-[#aca899] border-l-[#aca899] border-r-white"
  return (
    <footer className="flex h-[19px] overflow-hidden border-t-2 border-white">
      <span className={`pt-[6px] pl-[2px] text-[17px] leading-[20px] ${sans}`}>For Help, press F1</span>
      <div className="mt-[3px] mr-[25px] ml-auto flex gap-[4px]">
        <div className={`${pane} w-[229px]`} />
        <div className={`${pane} w-[29px]`} />
        <div className={`${pane} w-[30px]`} />
        <div className={`${pane} w-[44px]`} />
      </div>
    </footer>
  )
}

function Taskbar() {
  return (
    <div className={`flex h-12 items-center bg-linear-to-b from-[#3d8cf0] via-[#2059dc] via-20% to-[#225bd8] text-[17px] leading-none text-white ${tahoma}`}>
      <button
        type="button"
        className={`flex h-full w-[155px] items-center rounded-r-2xl bg-linear-to-b from-[#5aa85a] via-[#3a933a] via-25% to-[#2f852f] pl-[16px] shadow-[inset_-4px_-2px_5px_#206820] ${sans}`}
      >
        <svg viewBox="0 0 30 28" className="h-7 w-[30px]">
          <path d="M5 3Q10-1 15 3l-2 10q-5-3-10 0z" fill="#f0642d" />
          <path d="M17 4q5 3 12 0l-3 10q-6 2-11-1z" fill="#8cd234" />
          <path d="M3 15q5-4 10 0l-2 10Q6 21 1 24z" fill="#6a9cf5" />
          <path d="M15 15q5 3 11 1l-3 9q-5 3-10 0z" fill="#fbcf2d" />
        </svg>
        <span className="ml-[8px] text-[28px] font-bold italic [text-shadow:2px_2px_2px_#1c4d1c]">start</span>
      </button>
      <button type="button" className="ml-[15px] flex h-[38px] w-[255px] items-center rounded-sm bg-[#1a4fb8] pl-[19px] text-[18px] shadow-[inset_2px_2px_2px_#123a90]">
        <AppIcon />
        <span className="ml-[7px]">DriveMon - [MASTER...</span>
      </button>
      <button type="button" className="ml-[2px] flex h-[38px] w-[253px] items-center rounded-sm bg-linear-to-b from-[#5a9bf8] via-[#3c81f3] via-15% to-[#3a7cf0] pl-[14px] text-[18px]">
        <svg viewBox="0 0 26 26" className="size-[26px]">
          <path d="M1 1h24v24H1z" fill="#c8502a" />
          <path d="M4 4h18v18H4z" fill="#fbe6dc" />
          <path d="M6 6h12v2H6z" fill="#c8502a" />
          <circle cx="12" cy="15" r="5.500" fill="#c8502a" />
          <path d="M12 15v-5a5 5 0 0 1 5 5z" fill="#fbe6dc" />
          <path d="M19 11h2v2h-2zM19 15h2v2h-2z" fill="#c8502a" />
        </svg>
        <span className="ml-[5px]">Microsoft PowerPoint ...</span>
      </button>
      <div className="ml-auto flex h-full w-[177px] items-center border-l-2 border-[#0c3c9c] bg-linear-to-b from-[#26b4f4] via-[#1090e8] via-20% to-[#1297ee]">
        <button type="button" aria-label="Show hidden icons" className="-ml-[16px] flex size-[30px] shrink-0 items-center justify-center rounded-full border-2 border-[#8cc4f4] bg-[#1a7ee0]">
          <svg viewBox="0 0 14 14" className="size-[14px]" fill="none">
            <path d="M10 1L4 7l6 6" stroke="#fff" strokeWidth="3" />
          </svg>
        </button>
        <svg viewBox="0 0 28 28" className="ml-[1px] h-7 w-7">
          <path d="M10 2h11v10H10zM1 7h11v10H1z" fill="#1c2150" stroke="#b8bcd8" strokeWidth="1.500" />
          <path d="M3 19h8l2 5H1z" fill="#d8d0f0" />
          <path d="M14 14l11 12M25 14L14 26" stroke="#e02a20" strokeWidth="4" />
        </svg>
        <svg viewBox="0 0 28 28" className="ml-[1px] h-7 w-7" fill="none">
          <path d="M1 4h13v11H1z" fill="#1c2150" stroke="#8c98c8" strokeWidth="1.500" />
          <path d="M3 17h8l2 5H1z" fill="#d8d0f0" />
          <path d="M16 7q3 4 0 8M20 4q4 6 0 13M23 2q5 9 0 17" stroke="#b8d0f0" strokeWidth="2" />
        </svg>
        <svg viewBox="0 0 28 28" className="h-7 w-7" fill="none">
          <path d="M2 9l7-6 9 1v14l-7 2-7-4z" fill="#5c5c5c" />
          <circle cx="12" cy="10" r="4" fill="#9c9c9c" stroke="#333" strokeWidth="2" />
          <circle cx="17" cy="19" r="6" fill="#e03a20" stroke="#fff" strokeWidth="1.500" />
          <path d="M13 15l8 8" stroke="#fff" strokeWidth="2" />
        </svg>
        <span className="ml-[9px]">15:58</span>
      </div>
    </div>
  )
}

export default function App() {
  return (
    <div className="min-h-screen bg-white text-black">
      <div className="bg-[#ece9d8]">
        <TitleBar />
        <div className="border-l-[5px] border-[#0a50e0]">
          <MenuBar />
          <Toolbar />
          <div className="flex">
            <Sidebar />
            <main className="ml-2 flex min-w-0 flex-1 flex-col border-b-3 border-[#1a1a1a] pb-[5px]">
              <div className="flex flex-1 border-t-3 border-b-2 border-l-3 border-[#0a0aa0]">
                <section className={`min-w-0 flex-1 pb-[13px] ${sans}`}>
                  <div className="flex h-[45px] items-center border-b-2 border-[#1a1a10] pl-[9px] text-[22px] font-bold">
                    <h2 className="w-[320px]">Free Parameterization</h2>
                    <h2>System/Empty</h2>
                  </div>
                  <div className="pl-[2px]">
                    <ParamTable />
                  </div>
                </section>
                <div className="flex w-6 flex-col bg-[#f7f6f1] pt-px pb-[3px]">
                  <ScrollButton dir="up" />
                  <Thumb vertical className="mt-[92px] flex-1" />
                  <div className="mt-[3px]">
                    <ScrollButton dir="down" />
                  </div>
                </div>
              </div>
            </main>
          </div>
          <ControlBar />
          <StatusBar />
        </div>
        <Taskbar />
      </div>

      <div className={`mt-4 ml-[311px] w-[1407px] bg-[#ff0000] pt-[13px] pb-[10px] text-center text-[51px] leading-[61px] ${sans}`}>
        <p className="pr-3">Solved. The problem was wrong Control Mode P100.</p>
        <p>The earlier setting was v / f and this is only for Speed control</p>
        <p>Set P100=3 (Frequency) for Torque control</p>
      </div>
    </div>
  )
}
